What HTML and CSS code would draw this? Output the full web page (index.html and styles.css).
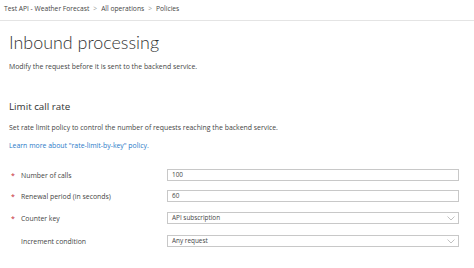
FILE: index.html
```html
<!DOCTYPE html>
<html>
<head>
<meta charset="utf-8">
<link rel="stylesheet" href="styles.css">
</head>
<body>
<div class="crumbs">
  <span>Test API - Weather Forecast</span><span class="sep">&gt;</span><span>All operations</span><span class="sep">&gt;</span><span>Policies</span>
</div>
<div class="page">
  <h1 class="title">Inbound processing</h1>
  <p class="desc">Modify the request before it is sent to the backend service.</p>
  <h2 class="section">Limit call rate</h2>
  <p class="desc2">Set rate limit policy to control the number of requests reaching the backend service.</p>
  <a class="link">Learn more about "rate-limit-by-key" policy.</a>
  <div class="form">
    <div class="row">
      <div class="label"><span class="req">*</span>Number of calls</div>
      <div class="field">100</div>
    </div>
    <div class="row">
      <div class="label"><span class="req">*</span>Renewal period (in seconds)</div>
      <div class="field">60</div>
    </div>
    <div class="row">
      <div class="label"><span class="req">*</span>Counter key</div>
      <div class="field select">API subscription<svg class="chev" viewBox="0 0 8 5" width="8" height="5"><path d="M0.5 0.5 L4 4 L7.5 0.5" fill="none" stroke="#bbb" stroke-width="0.9"/></svg></div>
    </div>
    <div class="row gap">
      <div class="label"><span class="req"></span>Increment condition</div>
      <div class="field select">Any request<svg class="chev" viewBox="0 0 8 5" width="8" height="5"><path d="M0.5 0.5 L4 4 L7.5 0.5" fill="none" stroke="#bbb" stroke-width="0.9"/></svg></div>
    </div>
  </div>
</div>
</body>
</html>
```
FILE: styles.css
```css
* { box-sizing: border-box; }
html, body { margin: 0; padding: 0; background: #fff; }
body {
  font-family: "Open Sans", "Noto Sans", sans-serif;
  color: #333;
  width: 474px;
  height: 268px;
  overflow: hidden;
}
.crumbs {
  height: 21px;
  border-bottom: 1px solid #e4e4e4;
  padding: 4px 0 0 4px;
  font-size: 6.7px;
  line-height: 10px;
  color: #444;
  display: flex;
}
.crumbs .sep { color: #999; margin: 0 4px; }
.page { padding: 0 0 0 9px; }
.title {
  margin: 0;
  padding-top: 9px;
  font-family: Lato, "Open Sans", sans-serif;
  font-weight: 300;
  font-size: 17.9px;
  line-height: 24px;
  color: #333;
}
.desc {
  margin: 8px 0 0;
  font-size: 6.9px;
  line-height: 10px;
  color: #444;
}
.section {
  margin: 28px 0 0;
  font-family: "Open Sans", sans-serif;
  font-weight: 400;
  font-size: 9.8px;
  line-height: 14px;
  color: #333;
}
.desc2 {
  margin: 9px 0 0;
  font-size: 6.9px;
  line-height: 10px;
  color: #444;
}
.link {
  display: block;
  margin-top: 8px;
  font-size: 6.9px;
  line-height: 10px;
  color: #2a7ac8;
}
.form { margin-top: 18px; display: flex; flex-direction: column; gap: 9px; }
.row { display: flex; align-items: center; }
.row.gap { margin-top: 2px; }
.row:nth-child(3) { margin-top: 1px; }
.label {
  width: 158px;
  display: flex;
  align-items: center;
  font-size: 6.9px;
  color: #444;
}
.req { width: 12px; padding-left: 2px; color: #c4262e; font-size: 7px; }
.field {
  width: 292px;
  height: 12px;
  border: 1px solid #c8c8c8;
  font-size: 6.4px;
  line-height: 10px;
  padding-left: 4px;
  color: #444;
  display: flex;
  align-items: center;
}
.select { justify-content: space-between; padding-right: 3px; }
.chev { display: block; }
```
